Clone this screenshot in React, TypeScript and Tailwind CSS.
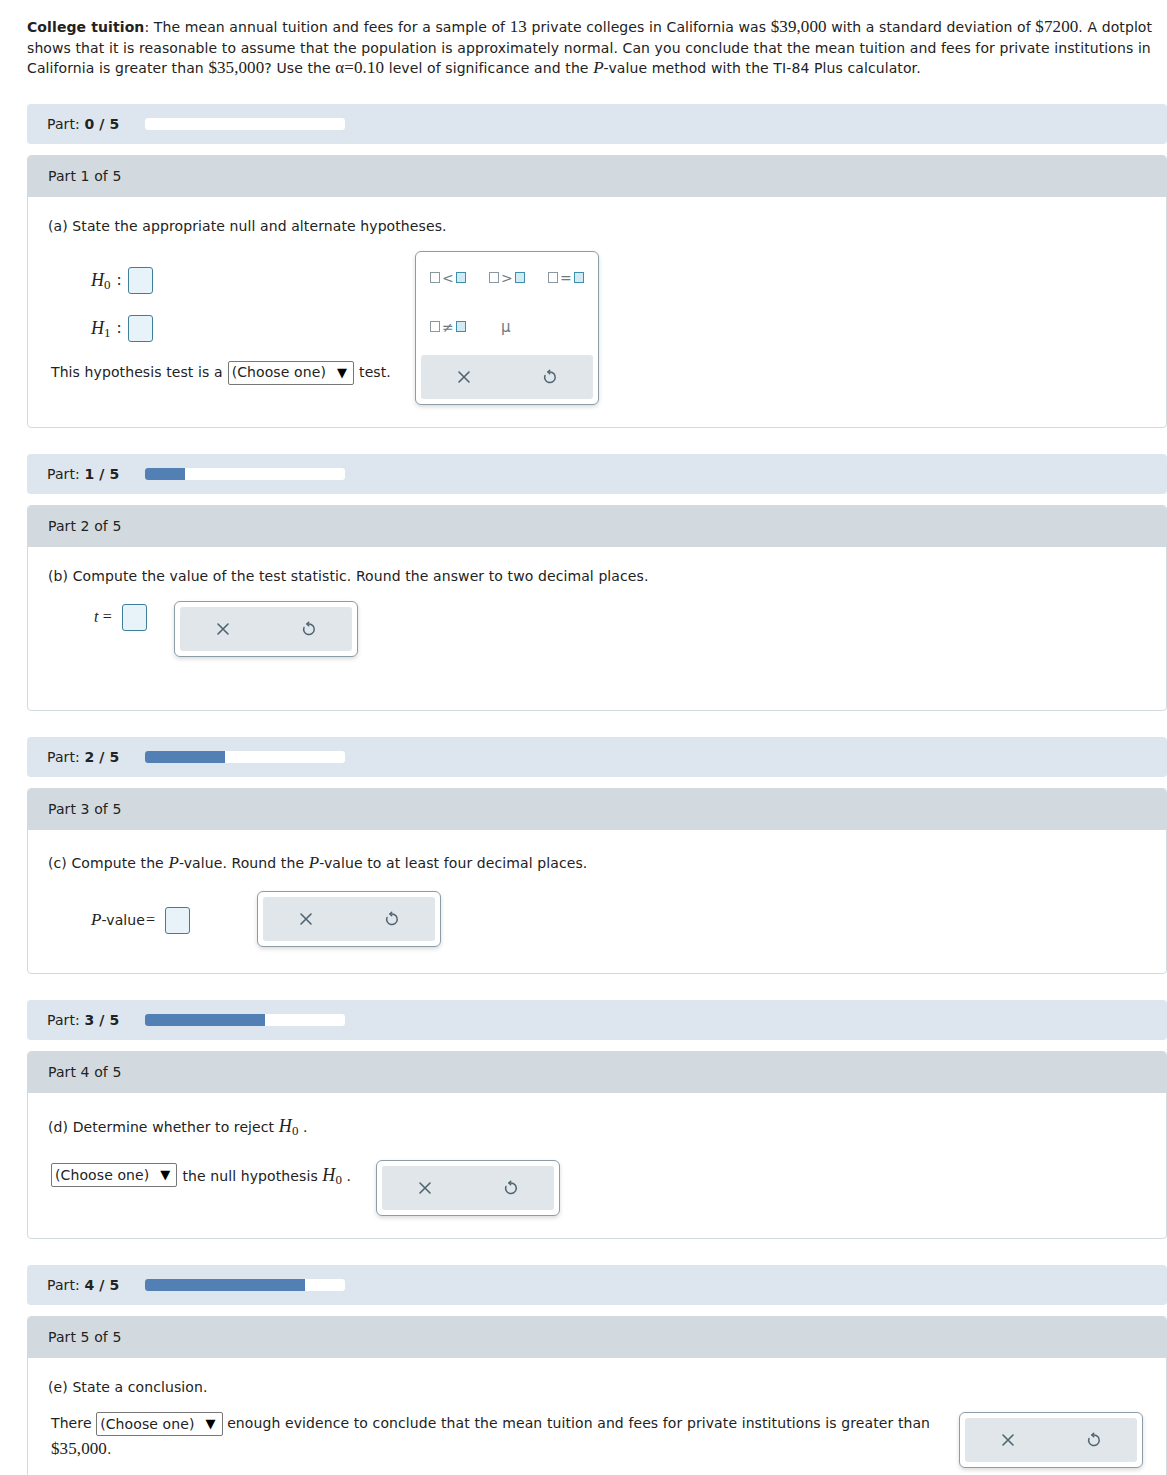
import React from 'react';

const serif = "font-['Liberation_Serif','Times_New_Roman',serif]";

function Progress({ done }: { done: number }) {
  return (
    <div className="h-[40px] rounded-[4px] bg-[#dde6ee] flex items-center pl-[20px]">
      <span className="w-[98px] pt-[1px]">
        Part: <b>{done} / 5</b>
      </span>
      <div className="w-[200px] h-[12px] rounded-[3px] bg-white overflow-hidden">
        <div className="h-full bg-[#527fb4]" style={{ width: `${(done / 5) * 100}%` }} />
      </div>
    </div>
  );
}

function Card({ n, children }: { n: number; children: React.ReactNode }) {
  return (
    <div className="mt-[11px] border border-[#d3dade] rounded-[4px] overflow-hidden">
      <div className="h-[41px] bg-[#d3dadf] flex items-center pl-[20px] pt-[1px]">Part {n} of 5</div>
      <div className="pl-[20px] pr-[23px]">{children}</div>
    </div>
  );
}

function InputBox() {
  return <span className="inline-block w-[25px] h-[27px] border border-[#3f7f98] bg-[#e8f3f9] rounded-[3px] align-middle" />;
}

function Select() {
  return (
    <span className="inline-flex items-center h-[24px] border border-[#777] rounded-[2px] pl-[3px] pr-[6px] gap-[11px] align-middle bg-white">
      <span>(Choose one)</span>
      <span className="text-[13px] text-black">▼</span>
    </span>
  );
}

function XIcon() {
  return (
    <svg width="14" height="14" viewBox="0 0 14 14" fill="none" stroke="#4e6470" strokeWidth="1.6" strokeLinecap="round">
      <path d="M2 2 L12 12 M12 2 L2 12" />
    </svg>
  );
}

function UndoIcon() {
  return (
    <svg width="16" height="17" viewBox="0 0 16 17" fill="none" stroke="#4e6470" strokeWidth="1.5" strokeLinecap="round" strokeLinejoin="round">
      <path d="M6 4 H8 A5.3 5.3 0 1 1 3 7.4" />
      <path d="M7.7 2.2 L5.9 4 L7.7 5.8" />
    </svg>
  );
}

function ToolBar() {
  return (
    <div className="h-[44px] bg-[#e0e6e9] rounded-[3px] flex items-center">
      <span className="w-1/2 flex justify-center"><XIcon /></span>
      <span className="w-1/2 flex justify-center"><UndoIcon /></span>
    </div>
  );
}

function Tools() {
  return (
    <div className="w-[184px] h-[56px] border border-[#8b9ea8] rounded-[6px] p-[5px] bg-white shadow-[0_2px_4px_rgba(0,0,0,0.15)]">
      <ToolBar />
    </div>
  );
}

function Sq({ filled }: { filled?: boolean }) {
  return (
    <span
      className={
        filled
          ? 'inline-block w-[10px] h-[11px] border-[1.5px] border-[#3d8fab] bg-[#d2eaf3]'
          : 'inline-block w-[10px] h-[11px] border-[1.5px] border-[#8a99a1] bg-white'
      }
    />
  );
}

function Rel({ op }: { op: string }) {
  return (
    <span className="inline-flex items-center gap-[1px] text-[#6b7b84] text-[14px] leading-none h-[14px]">
      <Sq />
      <span className="px-[1px]">{op}</span>
      <Sq filled />
    </span>
  );
}

function H({ sub }: { sub: string }) {
  return (
    <span className={`${serif} text-[18px]`}>
      <i>H</i>
      <sub className="text-[13px] relative top-[3px] not-italic">{sub}</sub>
    </span>
  );
}

function PVal() {
  return <i className={`${serif} text-[17px]`}>P</i>;
}

function Num({ children }: { children: React.ReactNode }) {
  return <span className={`${serif} text-[17px]`}>{children}</span>;
}

export default function App() {
  return (
    <div className="font-['DejaVu_Sans','Verdana',sans-serif] text-[14px] tracking-[0.1px] text-[#222] pl-[27px] pt-[17px] pb-[40px] bg-white">
      <p className="leading-[20.5px] pr-[10px]">
        <b>College tuition</b>: The mean annual tuition and fees for a sample of <Num>13</Num> private colleges in
        California was <Num>$39,000</Num> with a standard deviation of <Num>$7200</Num>. A dotplot shows that it is
        reasonable to assume that the population is approximately normal. Can you conclude that the mean tuition and
        fees for private institutions in California is greater than <Num>$35,000</Num>? Use the <Num>α=0.10</Num> level
        of significance and the <PVal />-value method with the TI-84 Plus calculator.
      </p>

      <div className="mt-[25px]">
        <Progress done={0} />
        <Card n={1}>
          <p className="pt-[19px] leading-[20px]">(a) State the appropriate null and alternate hypotheses.</p>
          <div className="flex items-start mt-[15px] pb-[22px]">
            <div className="w-[367px] pl-[3px] pt-[16px]">
              <div className="flex items-center h-[27px] pl-[40px] gap-[6px]">
                <H sub="0" />
                <span className={`${serif} text-[17px]`}>:</span>
                <InputBox />
              </div>
              <div className="flex items-center h-[27px] pl-[40px] gap-[6px] mt-[21px]">
                <H sub="1" />
                <span className={`${serif} text-[17px]`}>:</span>
                <InputBox />
              </div>
              <div className="mt-[19px] flex items-center gap-[5px]">
                <span>This hypothesis test is a</span>
                <Select />
                <span>test.</span>
              </div>
            </div>
            <div className="w-[184px] h-[154px] border border-[#8b9ea8] rounded-[6px] p-[5px] bg-white shadow-[0_2px_4px_rgba(0,0,0,0.15)] flex flex-col">
              <div className="grid grid-cols-[59px_59px_59px] pl-[9px] pt-[14px] gap-y-[35px]">
                <Rel op="<" />
                <Rel op=">" />
                <Rel op="=" />
                <Rel op="≠" />
                <span className="pl-[12px] text-[#6b7b84] text-[15px] leading-none h-[14px]">μ</span>
              </div>
              <div className="mt-auto">
                <ToolBar />
              </div>
            </div>
          </div>
        </Card>
      </div>

      <div className="mt-[26px]">
        <Progress done={1} />
        <Card n={2}>
          <p className="pt-[19px] leading-[20px]">
            (b) Compute the value of the test statistic. Round the answer to two decimal places.
          </p>
          <div className="flex items-start mt-[15px] pb-[53px] pl-[46px]">
            <div className="flex items-center mt-[3px]">
              <span className={`${serif} text-[16px] w-[28px]`}>
                <i>t</i> =
              </span>
              <InputBox />
            </div>
            <div className="ml-[27px]">
              <Tools />
            </div>
          </div>
        </Card>
      </div>

      <div className="mt-[26px]">
        <Progress done={2} />
        <Card n={3}>
          <p className="pt-[23px] leading-[20px]">
            (c) Compute the <PVal />-value. Round the <PVal />-value to at least four decimal places.
          </p>
          <div className="flex items-start mt-[18px] pb-[26px] pl-[43px]">
            <div className="flex items-center mt-[16px]">
              <span className="w-[74px]">
                <PVal />
                -value<span className={`${serif} text-[16px] pl-[1px]`}>=</span>
              </span>
              <InputBox />
            </div>
            <div className="ml-[67px]">
              <Tools />
            </div>
          </div>
        </Card>
      </div>

      <div className="mt-[26px]">
        <Progress done={3} />
        <Card n={4}>
          <p className="pt-[23px] leading-[20px]">
            (d) Determine whether to reject <H sub="0" /> .
          </p>
          <div className="flex items-start mt-[23px] pb-[22px] pl-[3px]">
            <div className="flex items-center gap-[5px] mt-[2px]">
              <Select />
              <span>
                the null hypothesis <H sub="0" /> .
              </span>
            </div>
            <div className="ml-[25px]">
              <Tools />
            </div>
          </div>
        </Card>
      </div>

      <div className="mt-[26px]">
        <Progress done={4} />
        <Card n={5}>
          <p className="pt-[19px] leading-[20px]">(e) State a conclusion.</p>
          <div className="flex items-start mt-[13px] pb-[10px] pl-[3px]">
            <div className="w-[880px] leading-[26px]">
              There <Select /> enough evidence to conclude that the mean tuition and fees for private institutions is
              greater than <Num>$35,000</Num>.
            </div>
            <div className="ml-auto mt-[2px]">
              <Tools />
            </div>
          </div>
        </Card>
      </div>
    </div>
  );
}
